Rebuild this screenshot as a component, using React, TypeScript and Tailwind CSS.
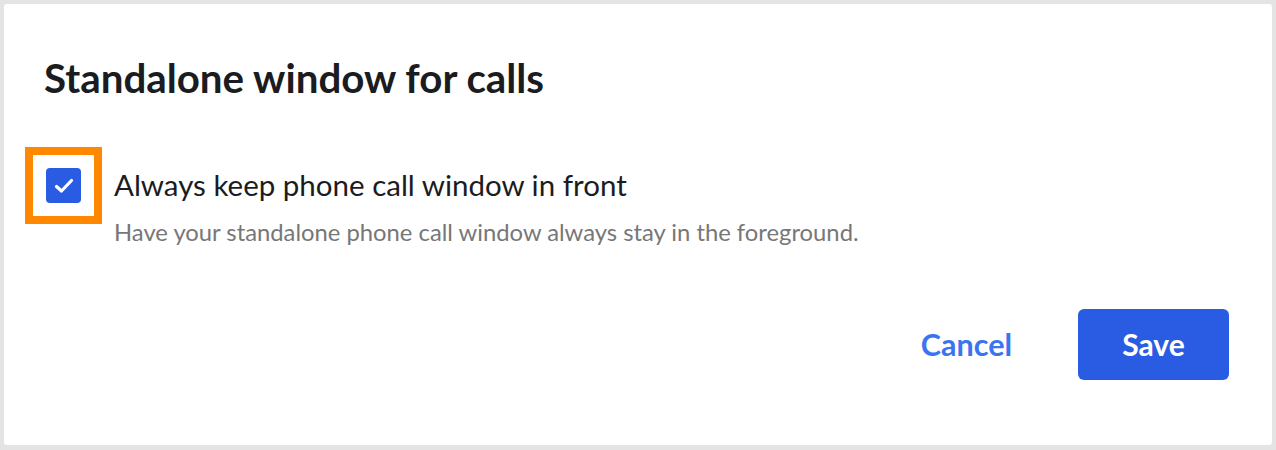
export default function App() {
  return (
    <div className="h-[450px] w-[1276px] bg-[#e4e4e4] pl-1 pr-1 pt-1 pb-[5px] font-['Lato','Liberation_Sans',sans-serif]">
      <div className="flex h-full flex-col rounded-[3px] bg-white px-10">
        <h1 className="mt-[50px] text-[40.3px] font-bold leading-[48px] text-[#1b1c21]">
          Standalone window for calls
        </h1>
        <div className="mt-[45px] flex items-start">
          <div className="-ml-[19px] flex h-[77px] w-[77px] shrink-0 items-center justify-center border-[8px] border-[#ff8800]">
            <span className="flex h-[35px] w-[35px] items-center justify-center rounded-[4px] bg-[#2a5be3]">
              <svg width="22" height="17" viewBox="0 0 22 17" fill="none">
                <path d="M3.5 9.5l5 4.5L18.5 3.5" stroke="white" strokeWidth="3.2" strokeLinecap="round" strokeLinejoin="round" />
              </svg>
            </span>
          </div>
          <div className="ml-[12px] flex flex-col">
            <span className="mt-[20px] text-[29.5px] leading-[36px] text-[#1b1c21]">
              Always keep phone call window in front
            </span>
            <span className="mt-[14px] text-[23.8px] leading-[30px] text-[#777777]">
              Have your standalone phone call window always stay in the foreground.
            </span>
          </div>
        </div>
        <div className="mt-[62px] flex items-center justify-end gap-[66px] pr-[3px]">
          <button className="text-[30.5px] font-bold text-[#3b74f0]">Cancel</button>
          <button className="h-[71px] w-[151px] rounded-[6px] bg-[#2a5be3] text-[30px] font-bold text-white">
            Save
          </button>
        </div>
      </div>
    </div>
  );
}
